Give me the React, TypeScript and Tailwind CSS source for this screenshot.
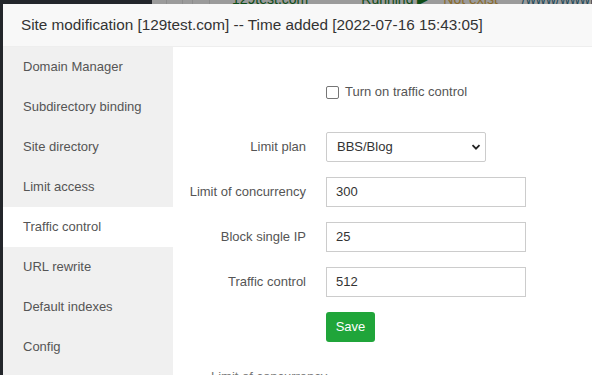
import React from 'react';

const menu = [
  'Domain Manager',
  'Subdirectory binding',
  'Site directory',
  'Limit access',
  'Traffic control',
  'URL rewrite',
  'Default indexes',
  'Config',
];

function Row({ label, children }: { label: string; children: React.ReactNode }) {
  return (
    <div className="flex items-center h-[30px]">
      <div className="w-[133px] text-right text-[13px] text-[#555]">{label}</div>
      <div className="ml-[20px]">{children}</div>
    </div>
  );
}

function TextInput({ value }: { value: string }) {
  return (
    <div className="w-[200px] h-[30px] border border-[#ccc] flex items-center px-[9px] text-[13px] text-[#333] bg-white">
      {value}
    </div>
  );
}

export default function App() {
  return (
    <div
      className="relative w-[592px] h-[375px] overflow-hidden bg-[#9a9a9a]"
      style={{ fontFamily: '"Liberation Sans", Arial, sans-serif' }}
    >
      {/* page behind the modal */}
      <div className="absolute inset-0 flex">
        <div className="w-[152px] h-full bg-[#23262b]" />
        <div className="flex-1 h-full bg-[#9b9b9b] flex">
          <div className="w-[15px] border-r border-[#8d8d8d]" />
          <div className="w-[16px] border-r border-[#8d8d8d]" />
          <div className="w-[10px] border-r border-[#8d8d8d]" />
          <div className="w-[17px] border-r border-[#8d8d8d]" />
        </div>
      </div>
      <div className="absolute left-0 top-[-8px] w-full flex text-[14px] leading-none whitespace-nowrap">
        <span className="ml-[232px] text-[#0f4d17]">129test.com</span>
        <span className="ml-[53px] text-[#0f4d17]">Running ▶</span>
        <span className="ml-[15px] text-[#8a6a2a]">Not exist</span>
        <span className="ml-[24px] text-[#1d4a5a]">/www/wwwroot</span>
      </div>

      {/* modal */}
      <div className="absolute left-[3px] top-[4px] w-[640px] h-[420px] bg-white flex flex-col">
        <div className="h-[43px] shrink-0 bg-[#f8f8f8] border-b border-[#eee] flex items-center pl-[18px] text-[15.3px] text-[#333]">
          Site modification [129test.com] -- Time added [2022-07-16 15:43:05]
        </div>
        <div className="flex flex-1">
          <div className="w-[170px] bg-[#f0f0f0] flex flex-col">
            {menu.map((m) => (
              <div
                key={m}
                className={`h-[40px] flex items-center pl-[20px] text-[13px] text-[#555] ${
                  m === 'Traffic control' ? 'bg-white' : ''
                }`}
              >
                {m}
              </div>
            ))}
          </div>
          <div className="flex-1 flex flex-col pt-[30px]">
            <div className="flex items-center h-[30px] ml-[153px]">
              <span className="w-[13px] h-[13px] border border-[#767676] rounded-[2px] bg-white" />
              <span className="ml-[6px] text-[13px] text-[#555]">Turn on traffic control</span>
            </div>
            <div className="mt-[25px] flex flex-col gap-[15px]">
              <Row label="Limit plan">
                <div className="w-[160px] h-[30px] border border-[#ccc] rounded-[2px] flex items-center justify-between pl-[10px] pr-[4px] text-[13px] text-[#333] bg-white">
                  <span>BBS/Blog</span>
                  <svg width="10" height="10" viewBox="0 0 10 10">
                    <path d="M1.5 3.2 L5 6.7 L8.5 3.2" fill="none" stroke="#222" strokeWidth="1.8" />
                  </svg>
                </div>
              </Row>
              <Row label="Limit of concurrency">
                <TextInput value="300" />
              </Row>
              <Row label="Block single IP">
                <TextInput value="25" />
              </Row>
              <Row label="Traffic control">
                <TextInput value="512" />
              </Row>
              <div className="ml-[153px]">
                <button className="w-[49px] h-[30px] bg-[#20a53a] text-white text-[13px] rounded-[3px]">
                  Save
                </button>
              </div>
            </div>
            <div className="mt-[25px] ml-[30px] text-[13px] text-[#777]">· Limit of concurrency</div>
          </div>
        </div>
      </div>
    </div>
  );
}
